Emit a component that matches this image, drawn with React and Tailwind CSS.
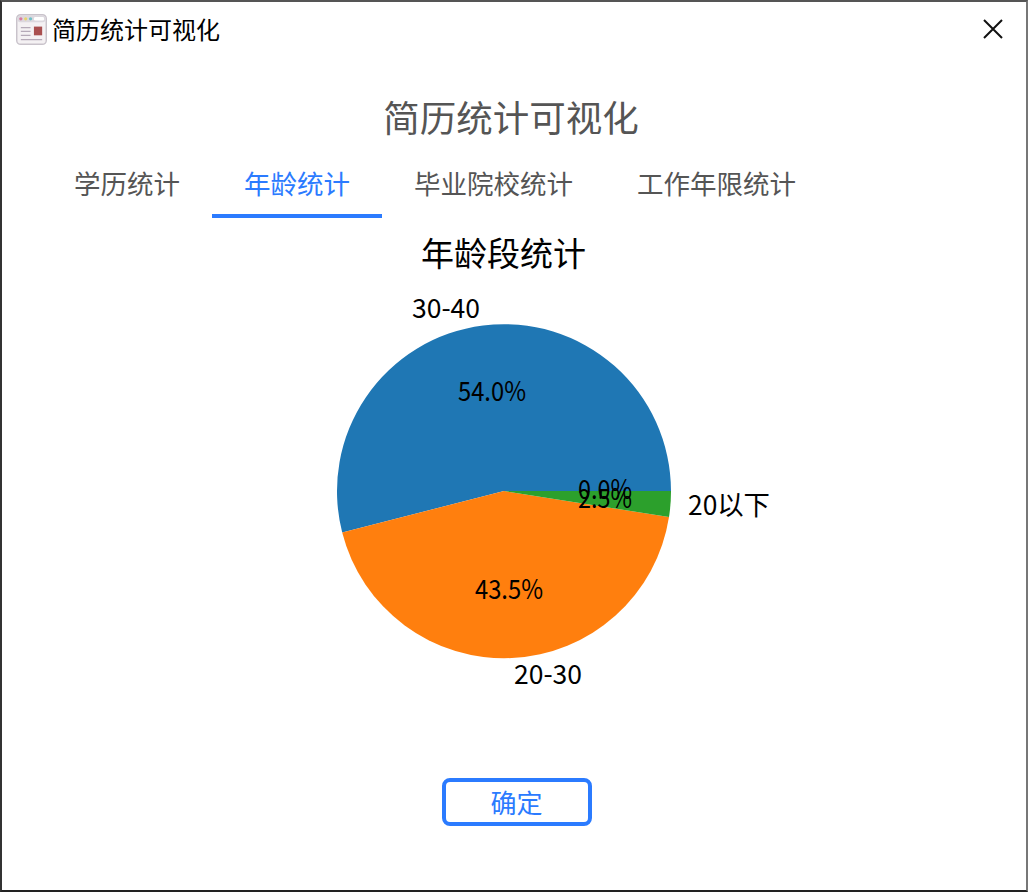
import { useState } from "react";

const tabs = ["学历统计", "年龄统计", "毕业院校统计", "工作年限统计"];

function AppIcon() {
  return (
    <svg width="31" height="31" viewBox="0 0 32 32" className="shrink-0">
      <rect x="0.75" y="0.75" width="30.5" height="30.5" rx="4" fill="#f4f1f3" stroke="#c9c3cb" strokeWidth="1.5" />
      <rect x="1.5" y="1.5" width="29" height="7" rx="3" fill="#dcd8de" />
      <circle cx="5" cy="5" r="1.7" fill="#d87aa0" />
      <circle cx="10" cy="5" r="1.7" fill="#e6d56e" />
      <circle cx="15" cy="5" r="1.7" fill="#6fc0c8" />
      <rect x="18.5" y="3.2" width="10.5" height="3.6" rx="1.5" fill="#fff" />
      <rect x="18.5" y="13" width="8.5" height="9" fill="#a94f4f" />
      <path d="M5 14h10M5 18h10M5 22h10M5 26.500h22" stroke="#b5aab8" strokeWidth="1.200" />
    </svg>
  );
}

function PieChart() {
  const label = "fill-black text-[27px]";
  return (
    <svg viewBox="184 225 640 545" className="w-[640px] h-[545px] ml-[182px] shrink-0">
      <path d="M504 491L671 491A167 167 0 1 0 342.200 532.500Z" fill="#1f77b4" />
      <path d="M504 491L342.200 532.500A167 167 0 0 0 669 517.100Z" fill="#ff7f0e" />
      <path d="M504 491L669 517.100A167 167 0 0 0 671 491Z" fill="#2ca02c" />
      <text x="503.500" y="266" textAnchor="middle" className="fill-black text-[33px]">年龄段统计</text>
      <text x="412" y="318" textLength="68" lengthAdjust="spacingAndGlyphs" className={label}>30-40</text>
      <text x="514" y="684" textLength="68" lengthAdjust="spacingAndGlyphs" className={label}>20-30</text>
      <text x="688" y="515" textLength="82" lengthAdjust="spacingAndGlyphs" className={label}>20以下</text>
      <text x="458" y="401" textLength="68" lengthAdjust="spacingAndGlyphs" className={label}>54.0%</text>
      <text x="475" y="599" textLength="68" lengthAdjust="spacingAndGlyphs" className={label}>43.5%</text>
      <text x="578" y="499" textLength="54" lengthAdjust="spacingAndGlyphs" className={label}>0.0%</text>
      <text x="578" y="508" textLength="54" lengthAdjust="spacingAndGlyphs" className={label}>2.5%</text>
    </svg>
  );
}

export default function App() {
  const [active, setActive] = useState(1);

  return (
    <div className="w-[1028px] h-[892px] bg-white flex flex-col overflow-hidden border-2 border-t-[#555] border-l-[#333] border-r-[#777] border-b-[#222] font-['Noto_Sans_CJK_SC',sans-serif]">
      <div className="flex items-center h-[54px] pl-[14px] pr-[23px] shrink-0">
        <AppIcon />
        <div className="ml-[5px] text-[24px] leading-none text-black">简历统计可视化</div>
        <button className="ml-auto">
          <svg width="20" height="20" viewBox="0 0 20 20" className="block">
            <path d="M1 1L19 19M19 1L1 19" stroke="#111" strokeWidth="2" />
          </svg>
        </button>
      </div>

      <div className="mt-[36px] mr-[6px] text-center text-[36.5px] leading-[50px] text-[#555]">简历统计可视化</div>

      <div className="flex ml-[40px] mt-[16px] shrink-0">
        {tabs.map((t, i) => (
          <button
            key={t}
            onClick={() => setActive(i)}
            className={
              "h-[60px] px-[32px] pb-[5px] text-[26.5px] leading-none border-b-4 " +
              (i === active ? "text-[#2b7bff] border-[#2b7bff]" : "text-[#555] border-transparent")
            }
          >
            {t}
          </button>
        ))}
      </div>

      <div className="mt-[7px]">
        <PieChart />
      </div>

      <div className="flex justify-center ml-[5px] mt-[8px]">
        <button className="w-[150px] h-[48px] rounded-lg border-4 border-[#2b7bff] text-[#2b7bff] text-[26px] leading-none">
          确定
        </button>
      </div>
    </div>
  );
}
